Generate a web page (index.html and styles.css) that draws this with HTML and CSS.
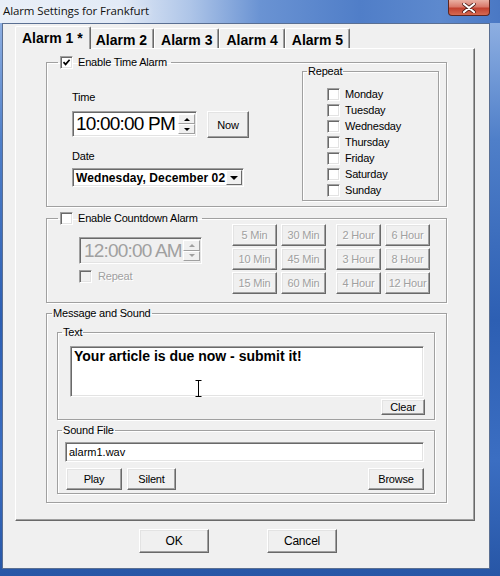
FILE: index.html
```html
<!DOCTYPE html>
<html lang="en">
<head>
    <meta charset="UTF-8">
    <title>Alarm Settings for Frankfurt</title>
    <link rel="stylesheet" href="styles.css">
</head>
<body>
    <div class="window">
        <div class="titlebar">
            <span class="title">Alarm Settings for Frankfurt</span>
            <div class="close-btn">
                <svg width="14" height="10" viewBox="0 0 14 10">
                    <path d="M2 1 L12 9 M12 1 L2 9" stroke="#4a1a14" stroke-width="3.6" stroke-linecap="round"/>
                    <path d="M2 1 L12 9 M12 1 L2 9" stroke="#fff" stroke-width="2.2" stroke-linecap="round"/>
                </svg>
            </div>
        </div>

        <div class="client">
            <div class="tabs">
                <div class="tab active">Alarm 1 *</div>
                <div class="tab">Alarm 2</div>
                <div class="tab">Alarm 3</div>
                <div class="tab">Alarm 4</div>
                <div class="tab">Alarm 5</div>
            </div>

            <div class="pane">
                <!-- time alarm -->
                <fieldset class="group big time-group">
                    <legend class="check-legend">
                        <span class="check">
                            <svg width="9" height="9" viewBox="0 0 9 9"><path d="M1.5 4.2 L3.6 6.4 L7.6 1.8" fill="none" stroke="#000" stroke-width="1.7"/></svg>
                        </span>
                        <span>Enable Time Alarm</span>
                    </legend>
                    <div class="time-body">
                        <div class="time-col">
                            <div class="label">Time</div>
                            <div class="time-row">
                                <div class="field spinner time-spin">
                                    <span class="spin-value">10:00:00 PM</span>
                                    <span class="spin-btns">
                                        <span class="spin-btn up"></span>
                                        <span class="spin-btn down"></span>
                                    </span>
                                </div>
                                <div class="btn now-btn">Now</div>
                            </div>
                            <div class="label date-label">Date</div>
                            <div class="field combo">
                                <span class="combo-value">Wednesday, December 02</span>
                                <span class="combo-arrow"></span>
                            </div>
                        </div>

                        <fieldset class="group repeat-group">
                            <legend>Repeat</legend>
                            <ul class="day-list">
                                <li><span class="check"></span>Monday</li>
                                <li><span class="check"></span>Tuesday</li>
                                <li><span class="check"></span>Wednesday</li>
                                <li><span class="check"></span>Thursday</li>
                                <li><span class="check"></span>Friday</li>
                                <li><span class="check"></span>Saturday</li>
                                <li><span class="check"></span>Sunday</li>
                            </ul>
                        </fieldset>
                    </div>
                </fieldset>

                <!-- countdown -->
                <fieldset class="group big countdown-group">
                    <legend class="check-legend">
                        <span class="check"></span>
                        <span>Enable Countdown Alarm</span>
                    </legend>
                    <div class="cd-body">
                        <div class="cd-col">
                            <div class="field spinner cd-spin disabled">
                                <span class="spin-value">12:00:00 AM</span>
                                <span class="spin-btns">
                                    <span class="spin-btn up"></span>
                                    <span class="spin-btn down"></span>
                                </span>
                            </div>
                            <div class="cd-repeat"><span class="check disabled"></span>Repeat</div>
                        </div>
                        <div class="quick">
                            <div class="quick-grid">
                                <div class="btn dis">5 Min</div>
                                <div class="btn dis">30 Min</div>
                                <div class="btn dis">10 Min</div>
                                <div class="btn dis">45 Min</div>
                                <div class="btn dis">15 Min</div>
                                <div class="btn dis">60 Min</div>
                            </div>
                            <div class="quick-grid">
                                <div class="btn dis">2 Hour</div>
                                <div class="btn dis">6 Hour</div>
                                <div class="btn dis">3 Hour</div>
                                <div class="btn dis">8 Hour</div>
                                <div class="btn dis">4 Hour</div>
                                <div class="btn dis">12 Hour</div>
                            </div>
                        </div>
                    </div>
                </fieldset>

                <!-- message and sound -->
                <fieldset class="group big message-group">
                    <legend>Message and Sound</legend>
                    <fieldset class="group inner text-group">
                        <legend>Text</legend>
                        <div class="text-col">
                            <div class="field textbox">
                                Your article is due now - submit it!
                                <svg class="ibeam" width="7" height="17" viewBox="0 0 7 17"><path d="M0.5 0.5 H6.5 M3.5 0.5 V16.5 M0.5 16.5 H6.5" fill="none" stroke="#000" stroke-width="1"/></svg>
                            </div>
                            <div class="btn clear-btn">Clear</div>
                        </div>
                    </fieldset>
                    <fieldset class="group inner sound-group">
                        <legend>Sound File</legend>
                        <div class="sound-col">
                            <div class="field sound-input">alarm1.wav</div>
                            <div class="sound-btns">
                                <div class="btn play-btn">Play</div>
                                <div class="btn silent-btn">Silent</div>
                                <div class="btn browse-btn">Browse</div>
                            </div>
                        </div>
                    </fieldset>
                </fieldset>
            </div>

            <div class="dialog-btns">
                <div class="btn dlg-btn">OK</div>
                <div class="btn dlg-btn cancel">Cancel</div>
            </div>
        </div>
    </div>
</body>
</html>
```

FILE: styles.css
```css
* {
    box-sizing: border-box;
}

body {
    margin: 0;
    width: 500px;
    height: 576px;
    overflow: hidden;
    font-family: "Liberation Sans", Arial, sans-serif;
    font-size: 11px;
    letter-spacing: -0.2px;
    color: #000;
    background: linear-gradient(180deg, #9ab8e6 0, #4f7fc9 140px, #2d5fb3 320px, #3b6ec2 460px, #2756a6 100%);
}

.window {
    display: flex;
    flex-direction: column;
    height: 576px;
}

/* title bar */
.titlebar {
    flex: none;
    height: 23px;
    display: flex;
    justify-content: space-between;
    align-items: flex-start;
    background: linear-gradient(90deg, #e9eff8 0, #e2eaf6 120px, #aec5e8 190px, #6a93d3 260px, #507ec8 360px, #5d89ce 440px, #4a78c4 100%);
}
.title {
    margin: 3px 0 0 3px;
    font-family: "Open Sans", "Noto Sans", sans-serif;
    font-size: 11.5px;
    line-height: 16px;
    letter-spacing: -0.1px;
    color: #111;
    text-shadow: 0 0 6px #fff;
}
.close-btn {
    width: 42px;
    height: 16px;
    margin-right: 10px;
    display: flex;
    align-items: center;
    justify-content: center;
    border: 1px solid #5e2620;
    border-top: none;
    border-radius: 0 0 4px 4px;
    background: linear-gradient(180deg, #eab0a3 0, #d9796a 45%, #c2412f 55%, #d66a52 100%);
}

/* client area */
.client {
    margin-left: 2px;
    width: 488px;
    height: 546px;
    background: #f0f0f0;
    border: 1px solid #5a6f92;
}

.tabs {
    display: flex;
    align-items: flex-start;
    height: 23px;
    margin: 2px 0 -1px 14px;
}
.tab {
    position: relative;
    height: 20px;
    margin-top: 2px;
    padding: 3px 6px 0;
    font-size: 14px;
    font-weight: bold;
    line-height: 16px;
    letter-spacing: 0;
    border: 1px solid;
    border-color: #fff #696969 transparent #fff;
    border-bottom: none;
    border-radius: 2px 2px 0 0;
    box-shadow: inset -1px 0 #a0a0a0;
    background: #f0f0f0;
}
.tab.active {
    z-index: 1;
    height: 23px;
    margin: 0 -2px;
    padding: 3px 7px 0 6px;
}

.pane {
    width: 460px;
    margin-left: 12px;
    padding: 0 0 17px;
    border: 1px solid;
    border-color: #fff #696969 #696969 #fff;
    box-shadow: inset -1px -1px #a0a0a0;
}

/* group boxes */
.group {
    min-width: 0;
    margin: 0;
    padding: 0;
    border: 1px solid #a0a0a0;
    box-shadow: 1px 1px #fff, inset 1px 1px #fff;
}
.group > legend {
    margin-left: 4px;
    padding: 0 1px;
    line-height: 13px;
}
.group > legend.check-legend {
    display: flex;
    gap: 5px;
    margin-left: 11px;
    padding: 0 4px 0 2px;
}
.big {
    width: 401px;
    margin-left: 30px;
}

.check {
    flex: none;
    display: flex;
    align-items: center;
    justify-content: center;
    width: 13px;
    height: 13px;
    background: #fff;
    border: 1px solid;
    border-color: #a0a0a0 #fff #fff #a0a0a0;
    box-shadow: inset 1px 1px #696969, inset -1px -1px #e3e3e3;
}
.check.disabled {
    background: #f0f0f0;
}

.field {
    background: #fff;
    border: 1px solid;
    border-color: #a0a0a0 #fff #fff #a0a0a0;
    box-shadow: inset 1px 1px #696969, inset -1px -1px #e3e3e3;
}

.btn {
    display: flex;
    align-items: center;
    justify-content: center;
    background: #f0f0f0;
    border: 1px solid;
    border-color: #fff #696969 #696969 #fff;
    box-shadow: inset -1px -1px #a0a0a0, inset 1px 1px #e3e3e3;
}
.btn.dis {
    color: #a0a0a0;
    text-shadow: 1px 1px #fff;
}

/* time alarm */
.time-group {
    margin-top: 7px;
    padding-bottom: 5px;
}
.time-body {
    display: flex;
    align-items: flex-start;
}
.time-col {
    margin-left: 25px;
    padding-top: 22px;
}
.label {
    line-height: 13px;
}
.time-row {
    display: flex;
    align-items: flex-start;
    margin-top: 7px;
}
.spinner {
    display: flex;
    align-items: center;
    padding: 2px 1px 2px 2px;
}
.time-spin {
    width: 125px;
    height: 26px;
}
.spin-value {
    flex: 1;
    padding-left: 1px;
    font-size: 19px;
    letter-spacing: -0.8px;
    line-height: 20px;
}
.spin-btns {
    align-self: stretch;
    display: flex;
    flex-direction: column;
    width: 17px;
}
.spin-btn {
    flex: 1;
    display: flex;
    align-items: center;
    justify-content: center;
    background: #f0f0f0;
    border: 1px solid;
    border-color: #fff #a0a0a0 #a0a0a0 #fff;
}
.spin-btn::after {
    content: "";
    border-left: 3px solid transparent;
    border-right: 3px solid transparent;
}
.spin-btn.up::after {
    border-bottom: 3px solid #000;
}
.spin-btn.down::after {
    border-top: 3px solid #000;
}
.disabled .spin-btn.up::after {
    border-bottom-color: #a0a0a0;
}
.disabled .spin-btn.down::after {
    border-top-color: #a0a0a0;
}
.now-btn {
    width: 42px;
    height: 27px;
    margin-left: 10px;
}
.date-label {
    margin-top: 12px;
}
.combo {
    display: flex;
    align-items: center;
    width: 172px;
    height: 19px;
    margin-top: 5px;
    padding: 1px 1px 1px 2px;
}
.combo-value {
    flex: 1;
    padding-left: 1px;
    font-size: 12px;
    font-weight: bold;
    letter-spacing: 0.1px;
    white-space: nowrap;
    overflow: hidden;
}
.combo-arrow {
    align-self: stretch;
    width: 16px;
    display: flex;
    align-items: center;
    justify-content: center;
    background: #f0f0f0;
    border: 1px solid;
    border-color: #fff #696969 #696969 #fff;
}
.combo-arrow::after {
    content: "";
    border-left: 4px solid transparent;
    border-right: 4px solid transparent;
    border-top: 4px solid #000;
}

.repeat-group {
    width: 137px;
    margin: -4px 7px 0 auto;
}
.day-list {
    list-style: none;
    margin: 0;
    padding: 10px 0 0 24px;
}
.day-list li {
    display: flex;
    gap: 5px;
    height: 16px;
    line-height: 13px;
}

/* countdown */
.countdown-group {
    margin-top: 5px;
}
.cd-body {
    display: flex;
    justify-content: space-between;
    align-items: flex-start;
    padding: 0 16px 8px 0;
}
.cd-col {
    margin-left: 32px;
    padding-top: 12px;
}
.cd-spin {
    width: 123px;
    height: 27px;
    background: #f0f0f0;
    color: #a0a0a0;
}
.cd-spin .spin-value {
    padding-left: 2px;
}
.cd-repeat {
    display: flex;
    gap: 6px;
    margin-top: 6px;
    line-height: 13px;
    color: #a0a0a0;
    text-shadow: 1px 1px #fff;
}
.quick {
    display: flex;
    gap: 10px;
    margin-top: -1px;
}
.quick-grid {
    display: grid;
    grid-template-columns: 45px 45px;
    grid-auto-rows: 22px;
    gap: 2px 4px;
}

/* message and sound */
.message-group {
    margin-top: 4px;
    padding-bottom: 8px;
}
.message-group > legend {
    margin-left: 5px;
}
.inner {
    width: 378px;
    margin-left: 10px;
}
.inner > legend {
    margin-left: 4px;
}
.text-group {
    margin-top: 6px;
    padding-bottom: 4px;
}
.text-col {
    display: flex;
    flex-direction: column;
    align-items: flex-end;
    width: 355px;
    margin: 7px 0 0 12px;
}
.textbox {
    position: relative;
    align-self: flex-start;
    width: 354px;
    height: 51px;
    padding: 1px 2px 0 3px;
    font-size: 14px;
    font-weight: bold;
    line-height: 16px;
    letter-spacing: 0;
}
.ibeam {
    position: absolute;
    left: 124px;
    top: 33px;
}
.clear-btn {
    width: 44px;
    height: 16px;
    margin-top: 2px;
}
.sound-group {
    margin-top: 4px;
    padding-bottom: 3px;
}
.sound-col {
    width: 359px;
    margin: 5px 0 0 7px;
}
.sound-input {
    height: 20px;
    padding: 0 3px;
    line-height: 18px;
    letter-spacing: 0;
}
.sound-btns {
    display: flex;
    gap: 5px;
    margin-top: 6px;
    padding-left: 1px;
}
.sound-btns .btn {
    height: 22px;
}
.play-btn,
.browse-btn {
    width: 56px;
}
.silent-btn {
    width: 49px;
}
.browse-btn {
    margin-left: auto;
}

/* bottom buttons */
.dialog-btns {
    display: flex;
    gap: 58px;
    margin: 8px 0 0 136px;
}
.dlg-btn {
    width: 70px;
    height: 24px;
    font-size: 12px;
}
```
